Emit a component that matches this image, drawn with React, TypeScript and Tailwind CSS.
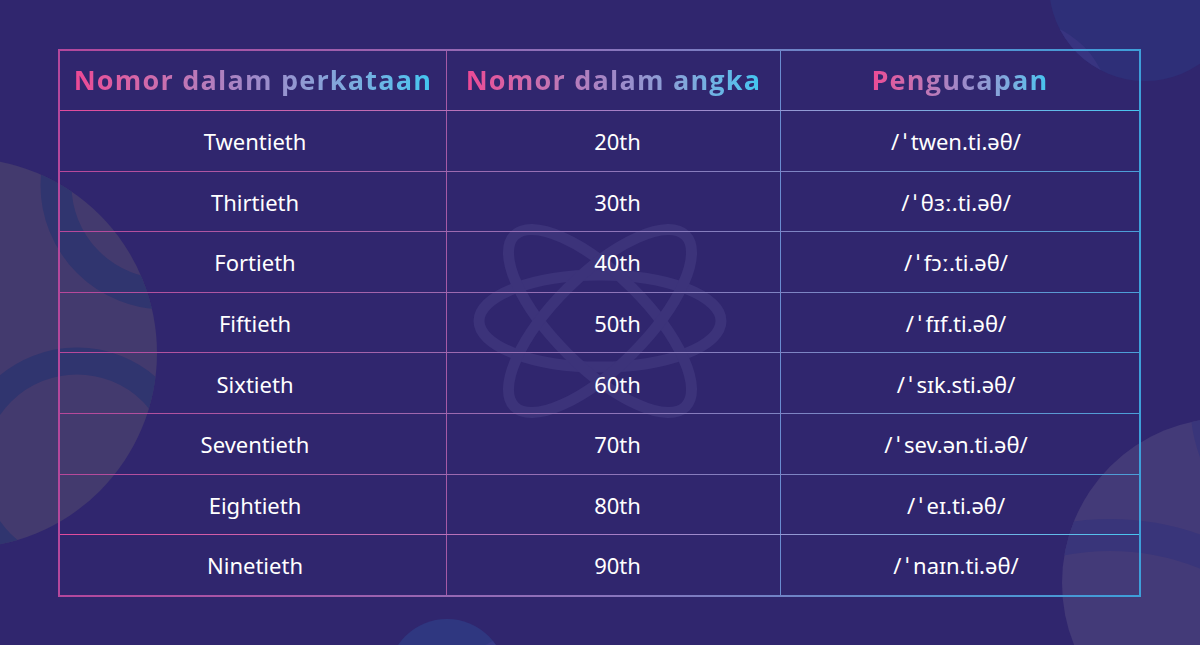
const rows = [
	["Twentieth", "20th", "twen.ti.əθ/"],
	["Thirtieth", "30th", "θɜː.ti.əθ/"],
	["Fortieth", "40th", "fɔː.ti.əθ/"],
	["Fiftieth", "50th", "fɪf.ti.əθ/"],
	["Sixtieth", "60th", "sɪk.sti.əθ/"],
	["Seventieth", "70th", "sev.ən.ti.əθ/"],
	["Eightieth", "80th", "eɪ.ti.əθ/"],
	["Ninetieth", "90th", "naɪn.ti.əθ/"],
];

const headers = ["Nomor dalam perkataan", "Nomor dalam angka", "Pengucapan"];

function Backdrop() {
	return (
		<svg
			className="absolute inset-0"
			width="1200"
			height="645"
			viewBox="0 0 1200 645"
		>
			<defs>
				<clipPath id="leftBlob">
					<circle cx="-38" cy="353" r="195" />
				</clipPath>
				<clipPath id="rightBlob">
					<circle cx="1227" cy="583" r="165" />
				</clipPath>
				<clipPath id="topBlob">
					<circle cx="1145" cy="-15" r="96" />
				</clipPath>
				<clipPath id="bottomBlob">
					<circle cx="447" cy="678" r="59" />
				</clipPath>
			</defs>

			{/* left blob */}
			<circle cx="-38" cy="353" r="195" fill="#433a6e" />
			<g clipPath="url(#leftBlob)" fill="none" stroke="#30356f">
				<circle cx="165" cy="185" r="109" strokeWidth="31" />
				<circle cx="77" cy="468" r="107" strokeWidth="27" />
			</g>

			{/* right blob */}
			<circle cx="1227" cy="583" r="165" fill="#433a78" />
			<g clipPath="url(#rightBlob)" fill="none" stroke="#39357a">
				<circle cx="1110" cy="790" r="255" strokeWidth="32" />
				<circle cx="1360" cy="400" r="150" strokeWidth="40" />
			</g>

			{/* top right blob */}
			<circle cx="1145" cy="-15" r="96" fill="#2e2f78" />
			<g clipPath="url(#topBlob)">
				<circle cx="1020" cy="110" r="90" fill="#383480" />
			</g>

			{/* bottom blob */}
			<circle cx="447" cy="678" r="59" fill="#2f3780" />
			<g clipPath="url(#bottomBlob)">
				<circle cx="520" cy="700" r="65" fill="#383a88" />
			</g>

			{/* faint atom mark */}
			<g fill="none" stroke="#3c337a" strokeWidth="11">
				<ellipse cx="600" cy="321" rx="121" ry="46" />
				<ellipse
					cx="600"
					cy="321"
					rx="121"
					ry="46"
					transform="rotate(45 600 321)"
				/>
				<ellipse
					cx="600"
					cy="321"
					rx="121"
					ry="46"
					transform="rotate(-45 600 321)"
				/>
			</g>
		</svg>
	);
}

function Line({ bright }: { bright?: boolean }) {
	return bright ? (
		<div className="h-px bg-linear-to-r from-[#e24a9c] via-[#a77cc4] to-[#45c6f0]" />
	) : (
		<div className="h-px bg-linear-to-r from-[#b8479a] via-[#8f74b8] to-[#4a9fd8]" />
	);
}

export default function App() {
	return (
		<div className="relative h-[645px] w-[1200px] overflow-hidden bg-[#30266e]">
			<Backdrop />

			<div className="relative pt-[49px] pl-[58px]">
				<div className="w-[1083px] border-2 [border-image:linear-gradient(90deg,#b4479c,#8a74bc,#3e9fd9)_1]">
					<div className="grid h-[59px] grid-cols-[387px_334px_1fr] font-['Open_Sans',sans-serif] text-[27px] font-bold tracking-[0.045em]">
						{headers.map((h, i) => (
							<div
								key={h}
								className={
									i === 0
										? "flex items-center justify-center border-r border-[#a55aa6]"
										: i === 1
											? "flex items-center justify-center border-r border-[#6a8cd0]"
											: "flex items-center justify-center"
								}
							>
								<span className="bg-linear-to-r from-[#ec4895] via-[#9f88c8] to-[#3ec6f0] bg-clip-text text-transparent">
									{h}
								</span>
							</div>
						))}
					</div>

					{rows.map((r, idx) => (
						<div key={r[0]}>
							<Line bright={idx === 0 || idx === 7} />
							<div className="grid h-[59.6px] grid-cols-[387px_334px_1fr] font-['Noto_Sans',sans-serif] text-[22px] text-white">
								<div className="flex items-center justify-center border-r border-[#a55aa6] pt-[2px] pl-1">
									{r[0]}
								</div>
								<div className="flex items-center justify-center border-r border-[#6a8cd0] pt-[2px] pl-2">
									{r[1]}
								</div>
								<div className="flex items-center justify-center pt-[2px] pr-2">
									/<span className="mx-[4px]">ˈ</span>
									{r[2]}
								</div>
							</div>
						</div>
					))}
				</div>
			</div>
		</div>
	);
}
